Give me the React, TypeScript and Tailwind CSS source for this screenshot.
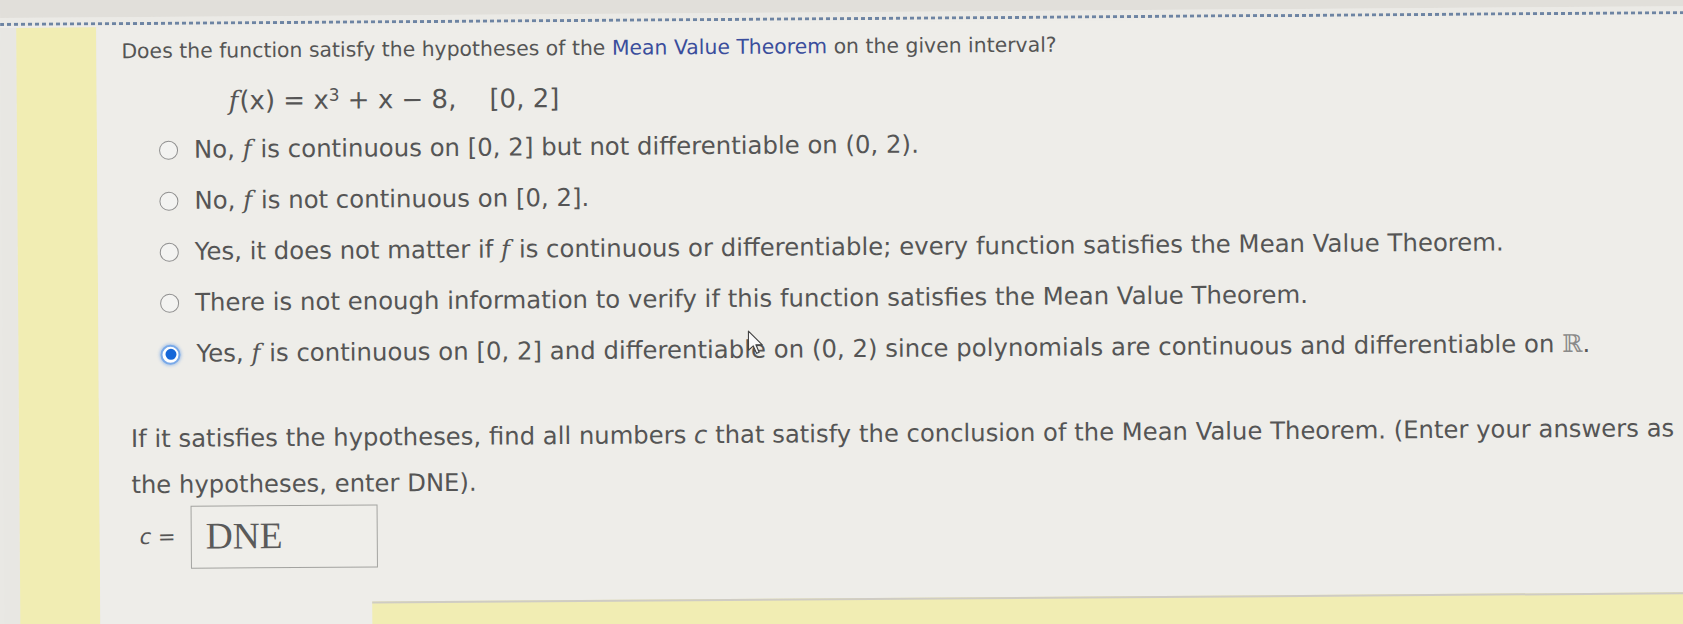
import React from 'react';

const Radio = ({ checked = false }: { checked?: boolean }) =>
  checked ? (
    <span className="flex h-[20px] w-[20px] shrink-0 items-center justify-center rounded-full border-[2px] border-[#79a9e8] bg-white shadow-[0_0_3px_1px_rgba(90,150,230,0.45)]">
      <span className="h-[11px] w-[11px] rounded-full bg-[#1667d8]" />
    </span>
  ) : (
    <span className="h-[19px] w-[19px] shrink-0 rounded-full border-[1.5px] border-[#8e8e8e] bg-[#f3f3f1]" />
  );

const F = () => <i className="font-[Georgia,'DejaVu_Serif',serif] pr-[1px]">f</i>;

const Cursor = () => (
  <svg className="absolute left-[-3px] top-[-5px]" width="17" height="26" viewBox="0 0 16 24">
    <path d="M1 1 L1 19 L5.5 15 L8.5 22 L11 21 L8 14 L14 14 Z" fill="#fafafa" stroke="#444" strokeWidth="1.1" strokeLinejoin="round" />
  </svg>
);

export default function App() {
  return (
    <div className="h-[624px] w-[1683px] overflow-hidden bg-[#e9e8e4] font-['DejaVu_Sans',Verdana,sans-serif] text-[#555555]">
      <div className="h-[700px] w-[1720px] origin-top-left -rotate-[0.4deg]">
        {/* top strip + dotted rule */}
        <div className="h-[18px] bg-[#e1dfda]" />
        <div className="h-[5px] bg-[#ebeae6]" />
        <div className="h-[3px] bg-[repeating-linear-gradient(90deg,#6d84a3_0_4px,transparent_4px_7px)]" />
        <div className="h-[2px] bg-[#eeede9]" />

        <div className="flex h-[680px]">
          <div className="w-[16px] shrink-0 bg-[#e8e7e3]" />
          <div className="w-[80px] shrink-0 bg-[#f1edb3]" />

          <div className="flex min-w-0 flex-1 flex-col overflow-hidden bg-[#eeede9] pl-[25px] pt-[10px]">
            <p className="whitespace-nowrap text-[20.4px] leading-[28px]">
              Does the function satisfy the hypotheses of the{' '}
              <span className="text-[#3a4d9c]">Mean Value Theorem</span> on the given interval?
            </p>

            <div className="ml-[107px] mt-[22px] whitespace-nowrap text-[26px] leading-[28px]">
              <F />(x) = x<sup className="text-[17px]">3</sup> + x − 8,&nbsp;&nbsp;&nbsp; [0, 2]
            </div>

            <div className="ml-[37px] mt-[10px] flex flex-col whitespace-nowrap text-[24.4px]">
              <label className="flex h-[51px] items-center gap-[16px]">
                <Radio />
                <span>
                  No, <F /> is continuous on [0, 2] but not differentiable on (0, 2).
                </span>
              </label>
              <label className="flex h-[51px] items-center gap-[16px]">
                <Radio />
                <span>
                  No, <F /> is not continuous on [0, 2].
                </span>
              </label>
              <label className="flex h-[51px] items-center gap-[16px]">
                <Radio />
                <span>
                  Yes, it does not matter if <F /> is continuous or differentiable; every function satisfies the Mean Value Theorem.
                </span>
              </label>
              <label className="flex h-[51px] items-center gap-[16px]">
                <Radio />
                <span>There is not enough information to verify if this function satisfies the Mean Value Theorem.</span>
              </label>
              <label className="flex h-[51px] items-center gap-[16px]">
                <Radio checked />
                <span>
                  Yes, <F /> is continuous on [0, 2] and differentiabl
                  <span className="relative">
                    e
                    <Cursor />
                  </span>{' '}
                  on (0, 2) since polynomials are continuous and differentiable on{' '}
                  <span className="font-['DejaVu_Serif',serif] text-[#8a8a8a]">ℝ</span>.
                </span>
              </label>
            </div>

            <div className="ml-[7px] mt-[36px] whitespace-nowrap text-[24.3px] leading-[46px]">
              <p>
                If it satisfies the hypotheses, find all numbers <i>c</i> that satisfy the conclusion of the Mean Value
                Theorem. (Enter your answers as
              </p>
              <p>the hypotheses, enter DNE).</p>
            </div>

            <div className="-mt-[2px] ml-[15px] flex items-center gap-[15px]">
              <span className="text-[21px]">
                <i>c</i> =
              </span>
              <div className="flex h-[63px] w-[187px] items-center border-[1.5px] border-[#a3a3a0] bg-[#efeeea] pl-[14px] font-['Liberation_Serif',serif] text-[37.5px] text-[#5a5a5a]">
                DNE
              </div>
            </div>

            <div className="ml-[247px] mt-[34px] h-[60px] border-t-[2px] border-[#cfccc4] bg-[#f1edb3]" />
          </div>
        </div>
      </div>
    </div>
  );
}
